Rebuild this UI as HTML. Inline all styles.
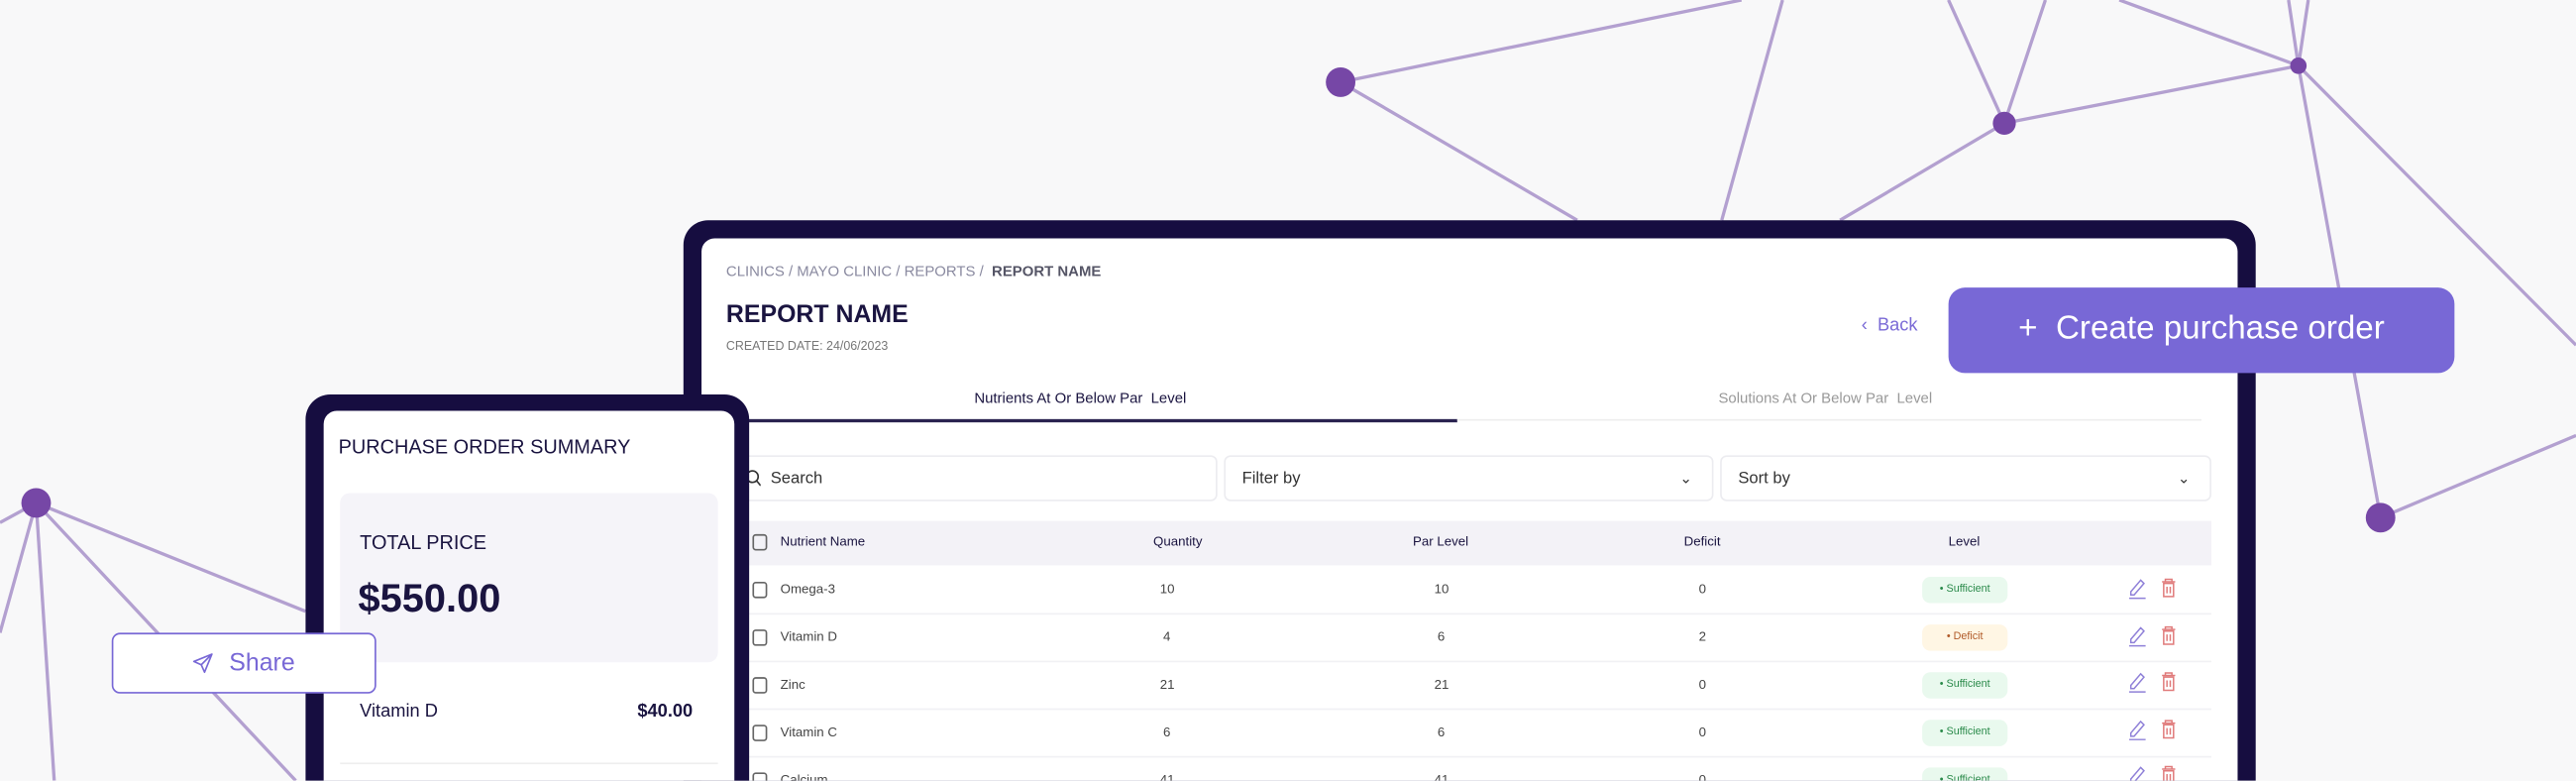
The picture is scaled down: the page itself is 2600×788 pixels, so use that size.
<!DOCTYPE html>
<html><head><meta charset="utf-8"><style>
*{box-sizing:border-box;margin:0;padding:0}
html,body{width:2600px;height:788px;overflow:hidden;background:#f8f8f9;font-family:"Liberation Sans",Arial,sans-serif}
#w{position:absolute;left:0;top:0;width:1568px;height:475px;overflow:hidden;transform:scale(1.6582);transform-origin:0 0}
.abs{position:absolute}
.frame{position:absolute;background:#160d40;border-radius:15px}
.inner{position:absolute;background:#fff;border-radius:8px;overflow:hidden}
.t{position:absolute;white-space:nowrap}
.inp{position:absolute;top:277px;height:28px;border:1px solid #ececf0;border-radius:4px;font-size:10px;color:#333;padding:0 10px;line-height:27px}
.row{position:absolute;left:448px;width:898px;height:29px;border-bottom:1px solid #f1f1f4;font-size:8px;color:#444}
.row span{position:absolute;top:0;line-height:28px}
.cb{position:absolute;left:10px;top:9px;width:9px;height:10px;border:1px solid #666;border-radius:2px}
.badge{position:absolute;left:722px;top:6px;width:52px;height:16px;border-radius:5px;font-size:6.5px;line-height:16px;text-align:center}
.g{background:#e9f9ee;color:#2a8a4a}.d{background:#fff6e4;color:#b05a28}
</style></head><body><div id="w">
<svg class="abs" style="left:0;top:0" width="1568" height="475" viewBox="0 0 1568 475">
<g stroke="#b3a0d0" stroke-width="2" fill="none">
<line x1="816" y1="50" x2="1060" y2="0"/><line x1="816" y1="50" x2="960" y2="134"/>
<line x1="1085" y1="0" x2="1048" y2="134"/><line x1="1186" y1="0" x2="1220" y2="75"/>
<line x1="1245" y1="0" x2="1220" y2="75"/><line x1="1220" y1="75" x2="1399" y2="40"/>
<line x1="1220" y1="75" x2="1120" y2="134"/><line x1="1290" y1="0" x2="1399" y2="40"/>
<line x1="1393" y1="0" x2="1399" y2="40"/><line x1="1405" y1="0" x2="1399" y2="40"/>
<line x1="1399" y1="40" x2="1449" y2="315"/><line x1="1399" y1="40" x2="1568" y2="210"/>
<line x1="1449" y1="315" x2="1568" y2="265"/>
<line x1="22" y1="306" x2="0" y2="318"/><line x1="22" y1="306" x2="0" y2="385"/>
<line x1="22" y1="306" x2="33" y2="475"/><line x1="22" y1="306" x2="186" y2="372"/>
<line x1="22" y1="306" x2="180" y2="475"/>
</g>
<g fill="#7647a6"><circle cx="816" cy="50" r="9"/><circle cx="1220" cy="75" r="7"/><circle cx="1399" cy="40" r="5"/><circle cx="1449" cy="315" r="9"/><circle cx="22" cy="306" r="9"/></g>
</svg>
<div class="frame" style="left:416px;top:134px;width:957px;height:400px"></div>
<div class="inner" style="left:427px;top:145px;width:935px;height:400px"></div>
<div class="t" style="left:442px;top:160px;font-size:9px;color:#8a8aa0">CLINICS / MAYO CLINIC / REPORTS / &nbsp;<b style="color:#555566">REPORT NAME</b></div>
<div class="t" style="left:442px;top:183px;font-size:15px;font-weight:bold;color:#1a1440">REPORT NAME</div>
<div class="t" style="left:442px;top:206px;font-size:7.5px;color:#777">CREATED DATE: 24/06/2023</div>
<div class="t" style="left:1133px;top:192px;font-size:11px;color:#7a6ad6">‹&nbsp; Back</div>
<div class="abs" style="left:1186px;top:175px;width:308px;height:52px;background:#7868d6;border-radius:10px;color:#fff;font-size:20px;line-height:51px;text-align:center">+&nbsp; Create purchase order</div>
<div class="t" style="left:593px;top:237px;font-size:9px;color:#1a1440">Nutrients At Or Below Par &nbsp;Level</div>
<div class="t" style="left:1046px;top:237px;font-size:9px;color:#999">Solutions At Or Below Par &nbsp;Level</div>
<div class="abs" style="left:427px;top:255px;width:460px;height:2px;background:#2a2350"></div>
<div class="abs" style="left:887px;top:255px;width:453px;height:1px;background:#eee"></div>
<div class="inp" style="left:448px;width:293px;padding-left:20px">Search</div>
<svg class="abs" style="left:453px;top:285px" width="10" height="11"><circle cx="5" cy="5" r="3.5" stroke="#333" fill="none"/><line x1="7.5" y1="7.5" x2="10" y2="10.5" stroke="#333"/></svg>
<div class="inp" style="left:745px;width:298px">Filter by<span style="position:absolute;right:12px;font-size:9px">⌄</span></div>
<div class="inp" style="left:1047px;width:299px">Sort by<span style="position:absolute;right:12px;font-size:9px">⌄</span></div>
<div class="abs" style="left:448px;top:317px;width:898px;height:27px;background:#f3f2f7;font-size:8px;color:#1a1440">
<div class="cb" style="top:8px"></div>
<span class="t" style="left:27px;top:8px">Nutrient Name</span><span class="t" style="left:254px;top:8px">Quantity</span><span class="t" style="left:412px;top:8px">Par Level</span><span class="t" style="left:577px;top:8px">Deficit</span><span class="t" style="left:738px;top:8px">Level</span></div>
<div class="row" style="top:345px"><div class="cb"></div><span style="left:27px">Omega-3</span><span style="left:258px">10</span><span style="left:425px">10</span><span style="left:586px">0</span><div class="badge g">• Sufficient</div></div>
<div class="row" style="top:374px"><div class="cb"></div><span style="left:27px">Vitamin D</span><span style="left:260px">4</span><span style="left:427px">6</span><span style="left:586px">2</span><div class="badge d">• Deficit</div></div>
<div class="row" style="top:403px"><div class="cb"></div><span style="left:27px">Zinc</span><span style="left:258px">21</span><span style="left:425px">21</span><span style="left:586px">0</span><div class="badge g">• Sufficient</div></div>
<div class="row" style="top:432px"><div class="cb"></div><span style="left:27px">Vitamin C</span><span style="left:260px">6</span><span style="left:427px">6</span><span style="left:586px">0</span><div class="badge g">• Sufficient</div></div>
<div class="row" style="top:461px"><div class="cb"></div><span style="left:27px">Calcium</span><span style="left:258px">41</span><span style="left:425px">41</span><span style="left:586px">0</span><div class="badge g">• Sufficient</div></div>
<svg class="abs" style="left:1290px;top:348px" width="40" height="130">
<g id="ic"><path d="M7 12 L13 5 L15 7 L9 14 L7 14 Z M6 16 H16" stroke="#8f80d8" stroke-width="0.9" fill="none"/><path d="M26 6 H34 M28 6 V4.5 H32 V6 M27 7 H33 V15 H27 Z M29 9 V13 M31 9 V13" stroke="#e07a7a" stroke-width="0.9" fill="none"/></g>
<use href="#ic" y="29"/><use href="#ic" y="57"/><use href="#ic" y="86"/><use href="#ic" y="114"/>
</svg>
<div class="frame" style="left:186px;top:240px;width:270px;height:300px"></div>
<div class="inner" style="left:197px;top:250px;width:250px;height:300px"></div>
<div class="t" style="left:206px;top:265px;font-size:12px;color:#1a1440">PURCHASE ORDER SUMMARY</div>
<div class="abs" style="left:207px;top:300px;width:230px;height:103px;background:#f5f4f9;border-radius:6px"></div>
<div class="t" style="left:219px;top:323px;font-size:12px;color:#1a1440">TOTAL PRICE</div>
<div class="t" style="left:218px;top:351px;font-size:24px;font-weight:bold;color:#1a1440">$550.00</div>
<div class="t" style="left:219px;top:427px;font-size:11px;color:#1a1440">Vitamin D</div>
<div class="t" style="left:388px;top:427px;font-size:11px;color:#1a1440;font-weight:bold">$40.00</div>
<div class="abs" style="left:207px;top:464px;width:230px;height:1px;background:#eee"></div>
<div class="abs" style="left:68px;top:385px;width:161px;height:37px;background:#fff;border:1px solid #7868d6;border-radius:5px;color:#7868d6;font-size:15px;display:flex;align-items:center;justify-content:center;gap:9px">
<svg width="13" height="13" viewBox="0 0 13 13"><path d="M12 1 L1 5.5 L5.5 7.5 L7.5 12 Z M5.5 7.5 L12 1" stroke="#7868d6" fill="none" stroke-width="1" stroke-linejoin="round"/></svg><span>Share</span></div>
</div></body></html>
